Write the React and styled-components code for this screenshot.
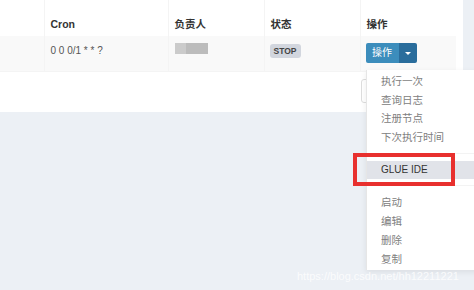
import styled, { createGlobalStyle } from 'styled-components';

const GlobalStyle = createGlobalStyle`
    html, body {
        margin: 0;
        padding: 0;
        width: 474px;
        height: 290px;
        overflow: hidden;
        background: #ecf0f5;
        font-family: "Liberation Sans", "Noto Sans CJK SC", sans-serif;
    }
`

const topItems = ['执行一次', '查询日志', '注册节点', '下次执行时间'];
const bottomItems = ['启动', '编辑', '删除', '复制'];

function App() {
    return (
        <Page>
            <GlobalStyle />
            <Box>
                <Table>
                    <colgroup>
                        <col style={{ width: 44 }} />
                        <col style={{ width: 124 }} />
                        <col style={{ width: 96 }} />
                        <col style={{ width: 96 }} />
                        <col style={{ width: 96 }} />
                    </colgroup>
                    <thead>
                        <tr>
                            <Th></Th>
                            <Th>Cron</Th>
                            <Th>负责人</Th>
                            <Th>状态</Th>
                            <Th>操作</Th>
                        </tr>
                    </thead>
                    <tbody>
                        <Row>
                            <Td></Td>
                            <Td>0 0 0/1 * * ?</Td>
                            <Td>
                                <Blur><BlurPart $light /><BlurPart /></Blur>
                            </Td>
                            <Td><Label>STOP</Label></Td>
                            <Td>
                                <BtnGroup>
                                    <Btn>操作</Btn>
                                    <Toggle><Caret /></Toggle>
                                </BtnGroup>
                            </Td>
                        </Row>
                    </tbody>
                </Table>
                {/* pager sits mostly under the open menu, only its first button shows */}
                <Pager>
                    <PageBtn>‹</PageBtn>
                    <PageBtn />
                    <PageBtn />
                </Pager>
            </Box>

            <Menu>
                {topItems.map((t) => <Item key={t}>{t}</Item>)}
                <Divider />
                <Item $active>GLUE IDE</Item>
                <Divider />
                {bottomItems.map((t) => <Item key={t}>{t}</Item>)}
            </Menu>
            <Highlight />
            <Watermark>https://blog.csdn.net/hh12211221</Watermark>
        </Page>
    );
}

const Page = styled.div`
    position: relative;
    width: 474px;
    height: 290px;
    background: #ecf0f5;
    overflow: hidden;
`
const Box = styled.div`
    width: 463px;
    height: 112px;
    background: #fff;
    box-sizing: border-box;
`
const Table = styled.table`
    border-collapse: collapse;
    table-layout: fixed;
    width: 456px;
    color: #333;
`
const Th = styled.th`
    height: 36px;
    box-sizing: border-box;
    padding: 15px 6px 4px;
    text-align: left;
    font-size: 10.5px;
    font-weight: bold;
    line-height: 14px;
    border-left: 1px solid #f4f4f4;
    &:first-child { border-left: none; }
`
const Row = styled.tr`
    background: #f9f9f9;
`
const Td = styled.td`
    height: 35px;
    box-sizing: border-box;
    padding: 8px 6px 0;
    vertical-align: top;
    font-size: 10px;
    line-height: 14px;
    color: #555;
    border-left: 1px solid #f4f4f4;
    border-bottom: 1px solid #f4f4f4;
    &:first-child { border-left: none; }
`
const Blur = styled.div`
    display: flex;
    width: 33px;
    height: 11px;
    margin-top: -1px;
`
const BlurPart = styled.div`
    flex: ${(p) => (p.$light ? '0 0 11px' : '1')};
    background: ${(p) => (p.$light ? '#cbcbcb' : '#bcbcbc')};
`
const Label = styled.span`
    display: inline-block;
    margin-left: -1px;
    padding: 2px 4px;
    border-radius: 3px;
    background: #d2d6de;
    color: #444;
    font-size: 8.5px;
    font-weight: bold;
    line-height: 10px;
`
const BtnGroup = styled.div`
    display: flex;
    height: 20px;
    margin-top: -1px;
    margin-left: -1px;
`
const Btn = styled.div`
    width: 33px;
    display: flex;
    align-items: center;
    justify-content: center;
    background: #3c8dbc;
    color: #fff;
    font-size: 10px;
    border-radius: 2px 0 0 2px;
`
const Toggle = styled.div`
    width: 18px;
    display: flex;
    align-items: center;
    justify-content: center;
    background: #2a6d9c;
    border-radius: 0 2px 2px 0;
`
const Caret = styled.span`
    width: 0;
    height: 0;
    border-left: 3px solid transparent;
    border-right: 3px solid transparent;
    border-top: 3px solid #fff;
`
const Pager = styled.div`
    display: flex;
    justify-content: flex-end;
    padding: 7px 8px 0 0;
`
const PageBtn = styled.div`
    width: 32px;
    height: 24px;
    box-sizing: border-box;
    display: flex;
    align-items: center;
    justify-content: center;
    border: 1px solid #ddd;
    margin-left: -1px;
    color: #999;
    font-size: 11px;
    &:first-child { border-radius: 3px 0 0 3px; }
`
const Menu = styled.div`
    position: absolute;
    left: 366px;
    top: 70px;
    width: 140px;
    padding: 2px 0;
    background: #fff;
    border-left: 1px solid #e6e6e6;
    box-shadow: 0 2px 6px rgba(0, 0, 0, 0.08);
`
const Item = styled.div`
    height: 18.7px;
    line-height: 18.7px;
    padding-left: 14px;
    font-size: ${(p) => (p.$active ? '10px' : '10.5px')};
    color: ${(p) => (p.$active ? '#333' : '#808080')};
    background: ${(p) => (p.$active ? '#e1e3e9' : 'transparent')};
    white-space: nowrap;
`
const Divider = styled.div`
    height: 1px;
    margin: 6px 0 7px;
    background: #f3f3f3;
`
const Highlight = styled.div`
    position: absolute;
    left: 353px;
    top: 153px;
    width: 102px;
    height: 33px;
    box-sizing: border-box;
    border: 4px solid #e8302e;
`
const Watermark = styled.div`
    position: absolute;
    left: 297px;
    top: 270px;
    font-size: 11px;
    line-height: 13px;
    color: rgba(255, 255, 255, 0.8);
    white-space: nowrap;
`

export default App;
